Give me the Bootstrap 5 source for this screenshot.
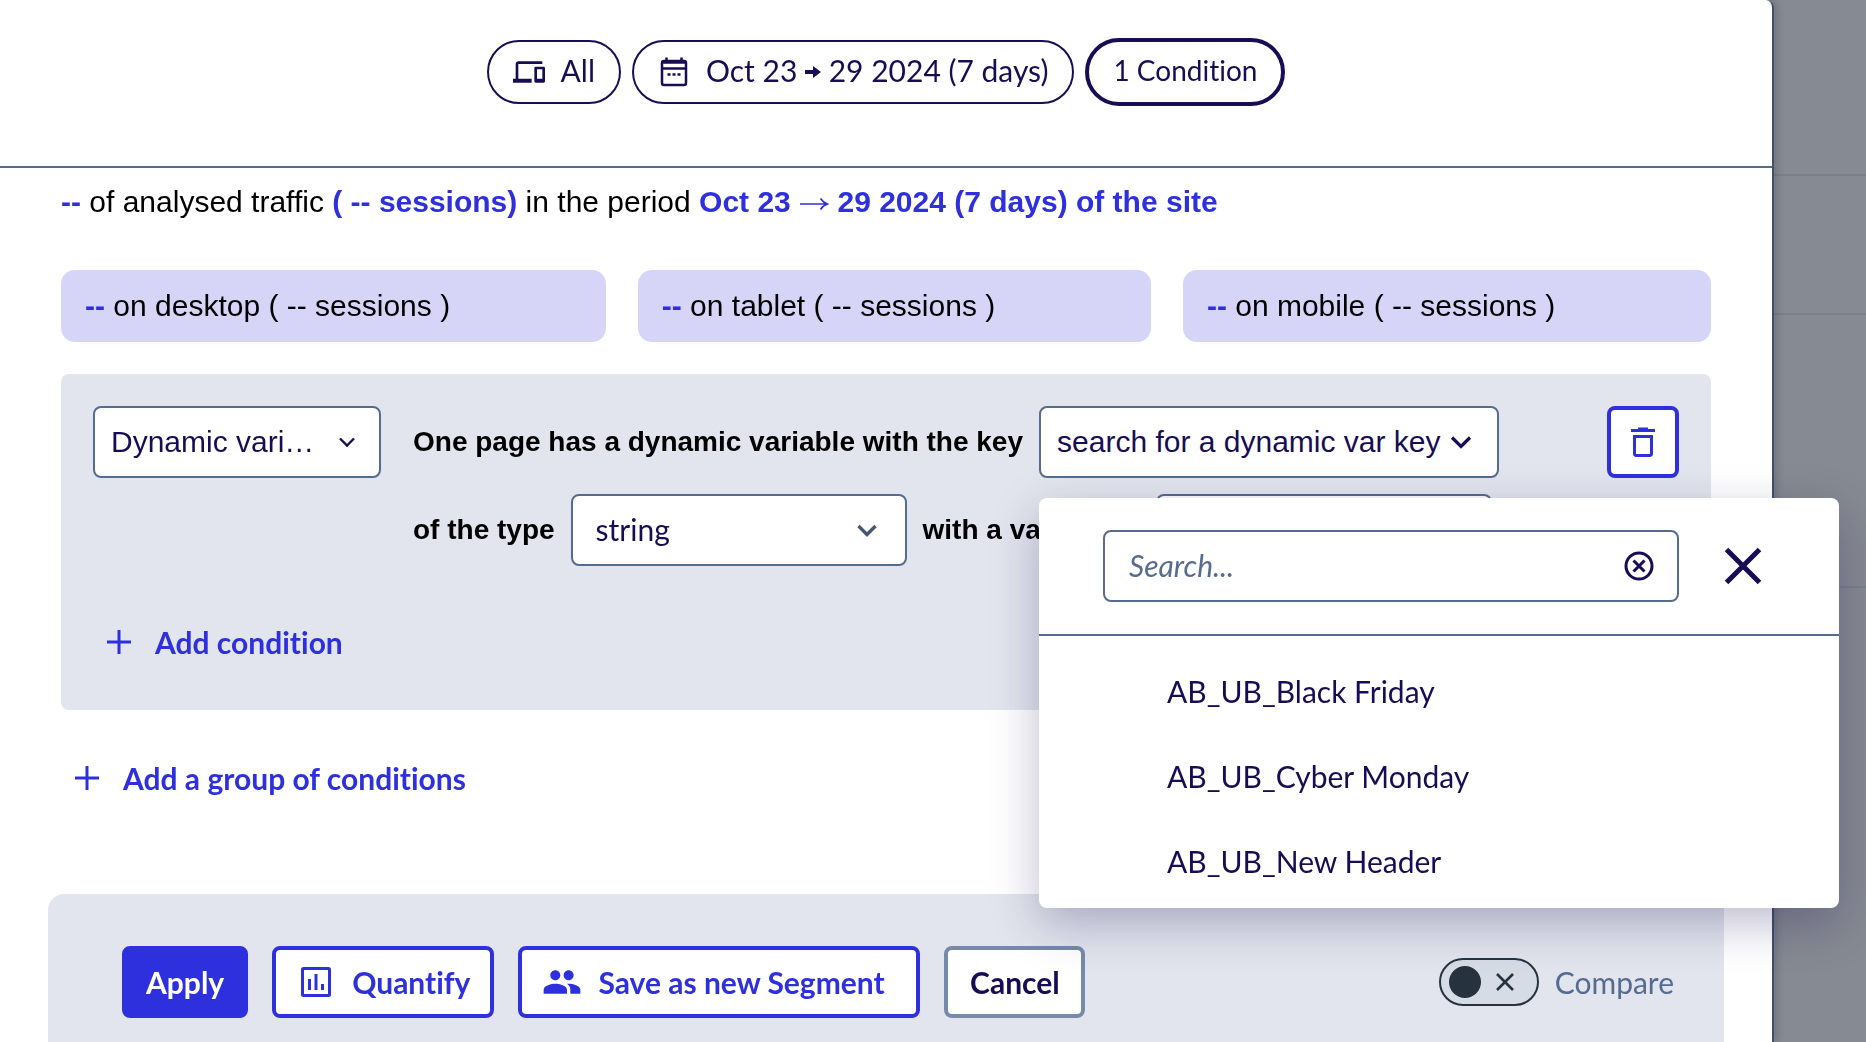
<!DOCTYPE html>
<html lang="en">
<head>
<meta charset="utf-8">
<meta name="viewport" content="width=device-width, initial-scale=1">
<title>Segment conditions</title>
<link href="https://cdn.jsdelivr.net/npm/bootstrap@5.3.0/dist/css/bootstrap.min.css" rel="stylesheet">
<style>
:root { --ink: #180d54; --brand: #2e30dd; --line: #566b90; --fog: #e2e5ed; }
body { background: #868a92; color: #000; font-family: Lato, sans-serif; font-size: 30px; line-height: 40px; overflow: hidden; }
body, button, input, select { font-variant-ligatures: none; }
.arial { font-family: "Liberation Sans", Arial, sans-serif; }
.backdrop { width: 100%; pointer-events: none; }
.backdrop div { border-bottom: 2px solid #7b7f8b; }
.back-a { height: 176px; } .back-b { height: 139px; } .back-c { height: 273px; }
.panel { width: calc(100% - 92px); min-height: 100vh; background: #fff; border-right: 2px solid #3f5069; border-top-right-radius: 8px; box-shadow: 2px 0 8px rgba(24,30,50,.25); }
.filters { height: 168px; padding-top: 38px; border-bottom: 2px solid var(--line); gap: 11px; }
.pill { height: 64px; margin-top: 2px; border: 2px solid var(--ink); border-radius: 32px; background: #fff; color: var(--ink); padding: 0 24px; gap: 16px; }
.pill span { padding-bottom: 4px; }
.pill-on { height: 68px; margin-top: 0; border-width: 4px; border-radius: 34px; font-size: 28px; }
.pill svg, .tool svg { flex: none; }
.pill .arrow { vertical-align: 3px; }
.blue { color: var(--brand); font-weight: 700; }
.content { padding: 14px 61px 0; }
.summary { margin-bottom: 48px; }
.stats { gap: 32px; margin-bottom: 32px; }
.stat { flex: 1 1 auto; height: 72px; padding: 0 24px; border-radius: 14px; background: #d6d5f8; }
.group-box { background: var(--fog); border-radius: 8px; padding: 32px; height: 336px; }
.pick { height: 72px; border: 2px solid var(--line); border-radius: 8px; color: var(--ink); background-color: #fff; padding: 0 16px; font-size: 30px; line-height: 40px; }
.pick-kind { width: 288px; padding-right: 62px; background-position: right 20px center; background-size: 24px; background-image: url("data:image/svg+xml,%3Csvg xmlns='http://www.w3.org/2000/svg' viewBox='0 0 24 24'%3E%3Cpath d='M5 8.500l7 7 7-7' fill='none' stroke='%23180d54' stroke-width='2.400'/%3E%3C/svg%3E"); }
.pick-type { width: 336px; padding-left: 23px; padding-bottom: 2px; font-family: Lato, sans-serif; background-position: right 26px center; background-size: 24px; background-image: url("data:image/svg+xml,%3Csvg xmlns='http://www.w3.org/2000/svg' viewBox='0 0 24 24'%3E%3Cpath d='M3.500 8l8.500 8.500L20.500 8' fill='none' stroke='%23475672' stroke-width='3.400'/%3E%3C/svg%3E"); }
.pick-key { width: 460px; }
.rule { font-size: 28px; font-weight: 700; gap: 16px; }
.rule label, .rule span { white-space: nowrap; }
.rules { gap: 16px; margin-left: 32px; }
.tool { height: 72px; border: 4px solid var(--brand); border-radius: 8px; background: #fff; color: var(--brand); font-weight: 700; padding: 0 20px; white-space: nowrap; }
.tool-solid { background: var(--brand); color: #fff; }
.tool-quiet { min-width: 141px; border-color: #768aa9; color: var(--ink); }
.tool-save { min-width: 402px; }
.tool-square { width: 72px; padding: 0; }
.adder { border: 0; background: none; padding: 0; color: var(--brand); font-weight: 700; gap: 24px; }
.add-cond { margin: 56px 0 0 14px; }
.add-group { margin: 48px 0 0 14px; }
.menu-pop { top: 92px; left: 0; width: 800px; z-index: 5; background: #fff; border-radius: 8px; box-shadow: 0 16px 48px rgba(24,13,84,.28); font-size: 30px; font-weight: 400; color: var(--ink); font-family: Lato, sans-serif; }
.menu-head { padding: 32px 64px; border-bottom: 2px solid var(--line); gap: 40px; }
.find { width: 576px; height: 72px; border: 2px solid var(--line); border-radius: 8px; padding: 0 22px 0 24px; }
.find input { border: 0; outline: 0; padding: 0 0 2px; min-width: 0; color: var(--ink); background: none; }
.find input::placeholder { color: var(--line); font-style: italic; opacity: 1; }
.plain { border: 0; background: none; padding: 0; color: var(--ink); line-height: 0; }
.menu-list { padding: 15px 0 2px; margin: 0; list-style: none; }
.menu-list a { display: block; height: 85px; padding: 20px 128px; color: var(--ink); text-decoration: none; }
.actions { margin: auto 48px 0; padding: 52px 50px 24px 74px; background: var(--fog); border-radius: 16px 16px 0 0; gap: 24px; }
.compare { gap: 16px; color: var(--line); }
.compare input { appearance: none; width: 100px; height: 48px; margin: 0; border: 2px solid #27323f; border-radius: 24px; background: #d5dce6 url("data:image/svg+xml,%3Csvg xmlns='http://www.w3.org/2000/svg' viewBox='0 0 96 44'%3E%3Ccircle cx='24' cy='22' r='16' fill='%2327323f'/%3E%3Cpath d='M56 14l16 16M72 14L56 30' stroke='%2327323f' stroke-width='2.600'/%3E%3C/svg%3E") center / 96px 44px no-repeat; }
</style>
</head>
<body>
<div class="backdrop position-fixed top-0 start-0"><div class="back-a"></div><div class="back-b"></div><div class="back-c"></div></div>

<main class="panel position-relative d-flex flex-column">
  <header class="filters d-flex justify-content-center align-items-start">
    <button class="pill d-flex align-items-center" type="button">
      <svg width="32" height="32" viewBox="0 0 24 24" fill="currentColor"><path d="M4 6h18V4H4c-1.100 0-2 .9-2 2v11H0v3h14v-3H4V6zm19 2h-6c-.55 0-1 .45-1 1v10c0 .55.45 1 1 1h6c.55 0 1-.45 1-1V9c0-.55-.45-1-1-1zm-1 9h-4v-7h4v7z"/></svg>
      <span>All</span>
    </button>
    <button class="pill d-flex align-items-center" type="button">
      <svg width="32" height="32" viewBox="0 0 32 32" fill="none" stroke="currentColor" stroke-width="2.500"><rect x="4" y="5" width="24" height="24" rx="2"/><path d="M4 12.500h24M8.500 1.500V5M23.500 1.500V5M4 6.500h24"/><path d="M9.500 18.500h3M14.500 18.500h3M19.500 18.500h3" /></svg>
      <span>Oct 23 <svg class="arrow" width="16" height="14" viewBox="0 0 16 14" fill="currentColor"><path d="M0 5h8V1l8 6-8 6V9H0z"/></svg> 29 2024 (7 days)</span>
    </button>
    <button class="pill pill-on d-flex align-items-center" type="button"><span>1 Condition</span></button>
  </header>

  <section class="content">
    <p class="summary arial"><span class="blue">--</span> of analysed traffic <span class="blue">( -- sessions)</span> in the period <span class="blue">Oct 23 <svg width="30" height="14" viewBox="0 0 30 14" fill="none" stroke="currentColor" stroke-width="1.600" role="img" aria-label="to"><path d="M1 7h27M21.500 1.500Q24 5.500 28.500 7 24 8.500 21.500 12.500"/></svg> 29 2024 (7 days) of the site</span></p>

    <div class="stats arial d-flex">
      <div class="stat d-flex align-items-center"><div><span class="blue">--</span> on desktop ( -- sessions )</div></div>
      <div class="stat d-flex align-items-center"><div><span class="blue">--</span> on tablet ( -- sessions )</div></div>
      <div class="stat d-flex align-items-center"><div><span class="blue">--</span> on mobile ( -- sessions )</div></div>
    </div>

    <div class="group-box">
      <div class="d-flex align-items-start">
        <select class="pick pick-kind form-select arial flex-shrink-0" aria-label="Condition kind"><option>Dynamic vari…</option></select>
        <div class="rules arial d-flex flex-column">
          <div class="rule d-flex align-items-center">
            <span>One page has a dynamic variable with the key</span>
            <div class="position-relative">
              <button class="pick pick-key d-flex align-items-center justify-content-between arial text-nowrap" type="button" aria-expanded="true">search for a dynamic var key
                <svg class="me-2" width="24" height="24" viewBox="0 0 24 24" fill="none" stroke="currentColor" stroke-width="3.200"><path d="M3 7.500l9 9 9-9"/></svg>
              </button>
              <div class="menu-pop position-absolute">
                <div class="menu-head d-flex align-items-center">
                  <div class="find d-flex align-items-center">
                    <input class="flex-grow-1" type="text" placeholder="Search..." aria-label="Search a variable key">
                    <button class="plain" type="button" aria-label="Clear"><svg width="32" height="32" viewBox="0 0 32 32" fill="none" stroke="currentColor" stroke-width="3"><circle cx="16" cy="16" r="13"/><path d="M10.500 10.500l11 11M21.500 10.500l-11 11"/></svg></button>
                  </div>
                  <button class="plain" type="button" aria-label="Close"><svg width="48" height="48" viewBox="0 0 48 48" fill="none" stroke="currentColor" stroke-width="5"><path d="M7.500 7.500l33 33M40.500 7.500l-33 33"/></svg></button>
                </div>
                <ul class="menu-list">
                  <li><a href="#">AB_UB_Black Friday</a></li>
                  <li><a href="#">AB_UB_Cyber Monday</a></li>
                  <li><a href="#">AB_UB_New Header</a></li>
                </ul>
              </div>
            </div>
          </div>
          <div class="rule d-flex align-items-center">
            <label for="type">of the type</label>
            <select class="pick pick-type form-select" id="type"><option>string</option></select>
            <label for="cmp">with a value that</label>
            <select class="pick pick-type form-select" id="cmp"><option>is</option></select>
          </div>
        </div>
        <button class="tool tool-square d-flex align-items-center justify-content-center ms-auto flex-shrink-0" type="button" aria-label="Delete condition">
          <svg width="32" height="32" viewBox="0 0 32 32" fill="none" stroke="currentColor" stroke-width="3"><path d="M7.500 10.500h17V28a1.500 1.500 0 0 1-1.500 1.500H9A1.500 1.500 0 0 1 7.500 28z"/><path d="M4 4.500h24M11 3h10"/></svg>
        </button>
      </div>
      <button class="adder add-cond d-flex align-items-center" type="button"><svg width="24" height="24" viewBox="0 0 24 24" stroke="currentColor" stroke-width="3"><path d="M12 0v24M0 12h24"/></svg>Add condition</button>
    </div>
    <button class="adder add-group d-flex align-items-center" type="button"><svg width="24" height="24" viewBox="0 0 24 24" stroke="currentColor" stroke-width="3"><path d="M12 0v24M0 12h24"/></svg>Add a group of conditions</button>
  </section>

  <footer class="actions d-flex align-items-center">
    <button class="tool tool-solid" type="button">Apply</button>
    <button class="tool d-flex align-items-center gap-3" type="button"><svg width="40" height="40" viewBox="0 0 40 40" fill="none" stroke="currentColor" stroke-width="3"><rect x="6.500" y="6.500" width="27" height="27" rx="1"/><path d="M13.500 17v11M20 12v16M26.500 22v6"/></svg>Quantify</button>
    <button class="tool tool-save d-flex align-items-center gap-3" type="button"><svg width="40" height="40" viewBox="0 0 24 24" fill="currentColor"><path d="M16 11c1.660 0 2.990-1.340 2.990-3S17.660 5 16 5s-3 1.340-3 3 1.340 3 3 3zm-8 0c1.660 0 2.990-1.340 2.990-3S9.660 5 8 5 5 6.340 5 8s1.340 3 3 3zm0 2c-2.330 0-7 1.170-7 3.500V19h14v-2.500C15 14.170 10.330 13 8 13zm8 0c-.29 0-.62.020-.97.050 1.160.84 1.970 1.970 1.970 3.450V19h6v-2.500c0-2.330-4.670-3.500-7-3.500z"/></svg>Save as new Segment</button>
    <button class="tool tool-quiet" type="button">Cancel</button>
    <label class="compare d-flex align-items-center ms-auto"><input type="checkbox" role="switch">Compare</label>
  </footer>
</main>
<script src="https://cdn.jsdelivr.net/npm/bootstrap@5.3.0/dist/js/bootstrap.bundle.min.js"></script>
</body>
</html>
